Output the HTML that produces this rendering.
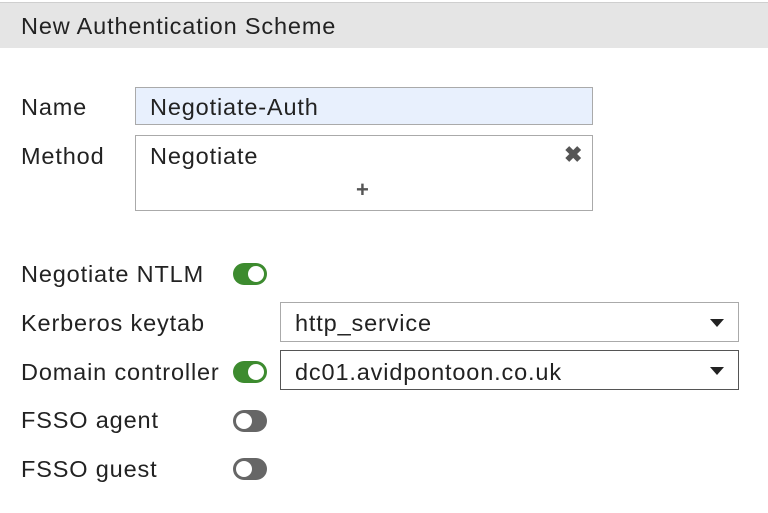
<!DOCTYPE html>
<html><head><style>
body{margin:0;width:768px;height:513px;background:#fff;font-family:"Liberation Sans",sans-serif;color:#222;position:relative;overflow:hidden}
.a{position:absolute}
.t{font-size:23.5px;letter-spacing:0.85px;line-height:26px;white-space:nowrap}
.hdr{left:0;top:2px;width:768px;height:45px;background:#e5e5e5;border-top:1px solid #cfcfcf}
.box{border:1px solid #aaa;box-sizing:border-box}
.tg{width:34px;height:22px;border-radius:11px;box-sizing:border-box}
.on{background:#3d8b2f}
.off{background:#666}
.k{position:absolute;top:3px;width:16px;height:16px;border-radius:50%;background:#fff}
.car{position:absolute;right:14px;top:16px;width:0;height:0;border-left:7px solid transparent;border-right:7px solid transparent;border-top:8px solid #222}
</style></head><body>
<div class="a hdr"></div>
<div class="a t" style="left:21px;top:13px">New Authentication Scheme</div>

<div class="a t" style="left:21px;top:94px">Name</div>
<div class="a box" style="left:135px;top:87px;width:458px;height:38px;background:#e8f0fd"></div>
<div class="a t" style="left:150px;top:94px">Negotiate-Auth</div>

<div class="a t" style="left:21px;top:143px">Method</div>
<div class="a box" style="left:135px;top:135px;width:458px;height:76px"></div>
<div class="a t" style="left:150px;top:143px">Negotiate</div>
<div class="a" style="left:564px;top:142px;font-size:22px;font-weight:bold;color:#555">✖</div>
<div class="a" style="left:356px;top:177px;font-size:22px;font-weight:bold;color:#555">+</div>

<div class="a t" style="left:21px;top:261px">Negotiate NTLM</div>
<div class="a tg on" style="left:233px;top:263px"><div class="k" style="left:15px"></div></div>

<div class="a t" style="left:21px;top:310px">Kerberos keytab</div>
<div class="a box" style="left:280px;top:302px;width:459px;height:40px"><div class="car"></div></div>
<div class="a t" style="left:295px;top:310px">http_service</div>

<div class="a t" style="left:21px;top:359px">Domain controller</div>
<div class="a tg on" style="left:233px;top:361px"><div class="k" style="left:15px"></div></div>
<div class="a box" style="left:280px;top:350px;width:459px;height:40px;border-color:#555"><div class="car"></div></div>
<div class="a t" style="left:295px;top:359px">dc01.avidpontoon.co.uk</div>

<div class="a t" style="left:21px;top:407px">FSSO agent</div>
<div class="a tg off" style="left:233px;top:410px"><div class="k" style="left:3px"></div></div>

<div class="a t" style="left:21px;top:456px">FSSO guest</div>
<div class="a tg off" style="left:233px;top:458px"><div class="k" style="left:3px"></div></div>
</body></html>
